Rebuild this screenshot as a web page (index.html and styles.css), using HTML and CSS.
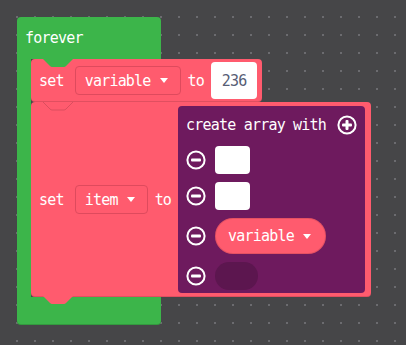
FILE: index.html
```html
<!DOCTYPE html>
<html>
  <head>
    <meta charset="UTF-8" />
    <title>forever</title>
    <link rel="stylesheet" href="styles.css">
  </head>

  <body>
    <div class="workspace">
      <div class="c-block">
        <div class="c-head">
          <span class="kw">forever</span>
          <svg class="tab tab-green" width="30" height="8" viewBox="0 0 30 8"><path d="M0 0 L7 7 Q8 8 9 8 L21 8 Q22 8 23 7 L30 0 Z" /></svg>
        </div>
        <div class="c-mid">
          <div class="c-arm"></div>
          <div class="stack">
            <!-- set variable to 236 -->
            <div class="stmt stmt-first">
              <span class="kw">set</span>
              <span class="dropdown">variable <svg class="caret" width="8" height="5" viewBox="0 0 8 5"><path d="M0 0 L8 0 L4 5 Z" /></svg></span>
              <span class="kw">to</span>
              <span class="num">236</span>
              <svg class="tab tab-inner" width="32" height="9" viewBox="0 0 32 9"><path d="M1 0 L8 7 Q9 8 10 8 L22 8 Q23 8 24 7 L31 0" /></svg>
            </div>
            <!-- set item to create array -->
            <div class="stmt stmt-second">
              <span class="kw">set</span>
              <span class="dropdown">item <svg class="caret" width="8" height="5" viewBox="0 0 8 5"><path d="M0 0 L8 0 L4 5 Z" /></svg></span>
              <span class="kw">to</span>
              <div class="array">
                <div class="array-head">
                  <span class="kw">create array with</span>
                  <svg class="btn" width="20" height="20" viewBox="0 0 20 20"><circle cx="10" cy="10" r="8.6" /><rect x="5" y="8.5" width="10" height="3" rx="1" /><rect x="8.5" y="5" width="3" height="10" rx="1" /></svg>
                </div>
                <div class="array-row">
                  <svg class="btn" width="20" height="20" viewBox="0 0 20 20"><circle cx="10" cy="10" r="8.6" /><rect x="5" y="8.5" width="10" height="3" rx="1" /></svg>
                  <span class="slot-white"></span>
                </div>
                <div class="array-row">
                  <svg class="btn" width="20" height="20" viewBox="0 0 20 20"><circle cx="10" cy="10" r="8.6" /><rect x="5" y="8.5" width="10" height="3" rx="1" /></svg>
                  <span class="slot-white"></span>
                </div>
                <div class="array-row">
                  <svg class="btn" width="20" height="20" viewBox="0 0 20 20"><circle cx="10" cy="10" r="8.6" /><rect x="5" y="8.5" width="10" height="3" rx="1" /></svg>
                  <span class="pill">variable <svg class="caret" width="8" height="5" viewBox="0 0 8 5"><path d="M0 0 L8 0 L4 5 Z" /></svg></span>
                </div>
                <div class="array-row">
                  <svg class="btn" width="20" height="20" viewBox="0 0 20 20"><circle cx="10" cy="10" r="8.6" /><rect x="5" y="8.5" width="10" height="3" rx="1" /></svg>
                  <span class="slot-empty"></span>
                </div>
              </div>
              <svg class="tab tab-pink" width="32" height="9" viewBox="0 0 32 9"><path d="M1 0 L8 7 Q9 8 10 8 L22 8 Q23 8 24 7 L31 0 Z" /></svg>
            </div>
          </div>
        </div>
        <div class="c-foot"></div>
      </div>
    </div>
  </body>
</html>
```

FILE: styles.css
```css
body {
  margin: 0;
  height: 345px;
  background-color: #464648;
  background-image: radial-gradient(circle, #6c6c70 0.7px, transparent 1.2px);
  background-size: 18px 18px;
  background-position: 8px 8px;
  color: #ffffff;
  font-family: "DejaVu Sans Mono", monospace;
  font-size: 15px;
  letter-spacing: -0.8px;
}

.workspace {
  padding: 17px;
}

/* forever block */
.c-block {
  display: flex;
  flex-direction: column;
  align-items: flex-start;
}

.c-head {
  position: relative;
  display: flex;
  align-items: center;
  width: 144px;
  height: 42px;
  padding-left: 8px;
  box-sizing: border-box;
  background-color: #3cb54a;
  border-radius: 4px 4px 0 0;
}

.c-mid {
  display: flex;
}

.c-arm {
  width: 14px;
  background-color: #3cb54a;
}

.c-foot {
  width: 144px;
  height: 28px;
  background-color: #3cb54a;
  border-radius: 0 0 4px 4px;
  box-shadow: inset 0 -1px 0 rgba(0, 0, 0, 0.15);
}

.tab {
  position: absolute;
  z-index: 2;
}

.tab-green {
  left: 26px;
  bottom: -8px;
  fill: #3cb54a;
}

/* statements */
.stack {
  display: flex;
  flex-direction: column;
}

.stmt {
  position: relative;
  display: flex;
  align-items: center;
  background-color: #ff5b6e;
  border-radius: 4px;
  box-shadow: inset 0 -1px 0 rgba(0, 0, 0, 0.12);
}

.stmt-first {
  align-self: flex-start;
  padding: 3px 5px 3px 8px;
}

.stmt-second {
  padding: 4px 6px 4px 8px;
}

.tab-inner {
  left: 11px;
  bottom: -9px;
  fill: none;
  stroke: rgba(0, 0, 0, 0.14);
  stroke-width: 1;
}

.tab-pink {
  left: 11px;
  bottom: -8px;
  fill: #ff5b6e;
}

.kw {
  white-space: nowrap;
}

.dropdown {
  display: flex;
  align-items: center;
  gap: 9px;
  margin-left: 11px;
  margin-right: 7px;
  padding: 0 12px 0 9px;
  border: 1px solid #de4a5d;
  border-radius: 4px;
  height: 27px;
}

.caret {
  fill: #ffffff;
}

.num {
  display: flex;
  align-items: center;
  justify-content: center;
  width: 46px;
  height: 37px;
  margin-left: 7px;
  background-color: #ffffff;
  border-radius: 4px;
  color: #575e75;
}

/* create array */
.array {
  display: flex;
  flex-direction: column;
  gap: 8px;
  width: 187px;
  margin-left: 7px;
  padding: 5px 8px 3px 8px;
  box-sizing: border-box;
  background-color: #6e1a5e;
  border-radius: 4px;
}

.array-head {
  display: flex;
  align-items: center;
  justify-content: space-between;
  height: 27px;
}

.array-row {
  display: flex;
  align-items: center;
  gap: 9px;
}

.btn circle {
  fill: none;
  stroke: #ffffff;
  stroke-width: 2;
}

.btn rect {
  fill: #ffffff;
}

.slot-white {
  width: 35px;
  height: 28px;
  background-color: #ffffff;
  border-radius: 4px;
}

.pill {
  display: flex;
  align-items: center;
  gap: 9px;
  height: 36px;
  padding: 0 15px 0 13px;
  box-sizing: border-box;
  background-color: #ff5b6e;
  border-radius: 18px;
  box-shadow: inset 0 0 0 1px rgba(0, 0, 0, 0.1);
}

.slot-empty {
  width: 43px;
  height: 28px;
  background-color: #5c164f;
  border-radius: 14px;
}
```
